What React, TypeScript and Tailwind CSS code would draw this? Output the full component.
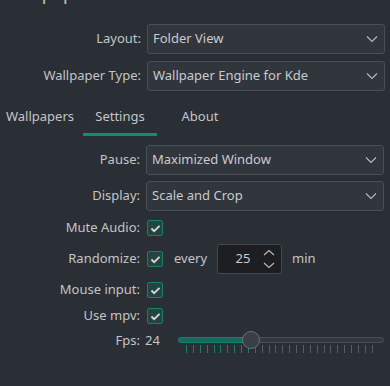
import React from "react";

const font = { fontFamily: '"Noto Sans", "Open Sans", sans-serif' };

function Chevron() {
  return (
    <svg width="12" height="8" viewBox="0 0 12 8" className="shrink-0">
      <path d="M1 1.5 L6 6.5 L11 1.5" fill="none" stroke="#b8bbbf" strokeWidth="1.1" />
    </svg>
  );
}

function Combo({ text }: { text: string }) {
  return (
    <div className="flex h-[30px] w-[238px] items-center justify-between rounded-[3px] border border-[#4a4f57] bg-[#31353c] pl-[5px] pr-[6px] text-[13px] text-[#c9cbce]">
      <span>{text}</span>
      <Chevron />
    </div>
  );
}

function Check() {
  return (
    <div className="flex h-[16px] w-[16px] items-center justify-center rounded-[2px] border border-[#1b7d6d] bg-[#24453f]">
      <svg width="11" height="9" viewBox="0 0 12 10">
        <path d="M1.5 5 L4.5 8 L10.5 2" fill="none" stroke="#d6d8da" strokeWidth="2" />
      </svg>
    </div>
  );
}

function Row({ label, children, h, lw = 140, gap = 7 }: { label: string; children: React.ReactNode; h: number; lw?: number; gap?: number }) {
  return (
    <div className="flex items-center" style={{ height: h }}>
      <div className="shrink-0 text-right text-[13px] text-[#c3c5c8]" style={{ width: lw, marginRight: gap }}>
        {label}
      </div>
      {children}
    </div>
  );
}

export default function App() {
  const ticks = Array.from({ length: 28 }, (_, i) => i);
  return (
    <div className="relative h-[386px] w-[390px] overflow-hidden bg-[#2a2e35]" style={font}>
      <div className="mt-[-19px] h-[24px] pl-[6px] text-[18px] leading-[24px] text-[#c3c5c8]">Wallpaper</div>
      <div className="mt-[19px] flex flex-col gap-[7px]">
        <Row label="Layout:" h={30} lw={141} gap={6}>
          <Combo text="Folder View" />
        </Row>
        <Row label="Wallpaper Type:" h={30} lw={141} gap={6}>
          <Combo text="Wallpaper Engine for Kde" />
        </Row>
      </div>
      <div className="mt-[9px] flex h-[37px] text-[13px] text-[#c3c5c8]">
        <div className="flex w-[80px] items-center justify-center pb-[4px]">Wallpapers</div>
        <div className="relative ml-[3px] flex w-[74px] items-center justify-center pb-[4px]">
          Settings
          <div className="absolute bottom-[1px] left-0 right-0 h-[3px] bg-[#178a76]" />
        </div>
        <div className="flex w-[86px] items-center justify-center pb-[4px]">About</div>
      </div>
      <div className="mt-[8px] flex flex-col">
        <Row label="Pause:" h={30} lw={140} gap={6}>
          <Combo text="Maximized Window" />
        </Row>
        <div className="h-[6px]" />
        <Row label="Display:" h={30} lw={140} gap={6}>
          <Combo text="Scale and Crop" />
        </Row>
        <div className="h-[2px]" />
        <Row label="Mute Audio:" h={30}>
          <Check />
        </Row>
        <Row label="Randomize:" h={32}>
          <Check />
          <span className="ml-[11px] text-[13px] text-[#c3c5c8]">every</span>
          <div className="relative ml-[10px] flex h-[30px] w-[65px] items-center rounded-[3px] border border-[#44484f] bg-[#1c1e22] text-[13px] text-[#c9cbce]">
            <span className="w-[50px] text-center">25</span>
            <svg width="12" height="20" viewBox="0 0 12 20" className="absolute right-[6px] top-[4px]">
              <path d="M1 6 L6 1.5 L11 6" fill="none" stroke="#b8bbbf" strokeWidth="1.1" />
              <path d="M1 14 L6 18.5 L11 14" fill="none" stroke="#b8bbbf" strokeWidth="1.1" />
            </svg>
          </div>
          <span className="ml-[10px] text-[13px] text-[#c3c5c8]">min</span>
        </Row>
        <Row label="Mouse input:" h={30}>
          <Check />
        </Row>
        <Row label="Use mpv:" h={22}>
          <Check />
        </Row>
        <Row label="Fps:" h={28} lw={140} gap={5}>
          <span className="w-[33px] text-[13px] text-[#c3c5c8]">24</span>
          <div className="relative h-[30px] w-[206px]">
            <div className="absolute left-0 top-[11px] h-[6px] w-[206px] rounded-full border border-[#484c53] bg-[#33373e]" />
            <div className="absolute left-0 top-[11px] h-[6px] w-[74px] rounded-full border border-[#16806e] bg-[#136a5d]" />
            {ticks.map((i) => (
              <div
                key={i}
                className="absolute top-[19px] h-[8px] w-[1px]"
                style={{ left: 8 + i * 6.88, background: 8 + i * 6.88 <= 71 ? "#15806d" : "#585c63" }}
              />
            ))}
            <div className="absolute left-[64px] top-[5px] h-[18px] w-[18px] rounded-full border border-[#6a6e75] bg-[#3a3e45]" />
          </div>
        </Row>
      </div>
    </div>
  );
}
